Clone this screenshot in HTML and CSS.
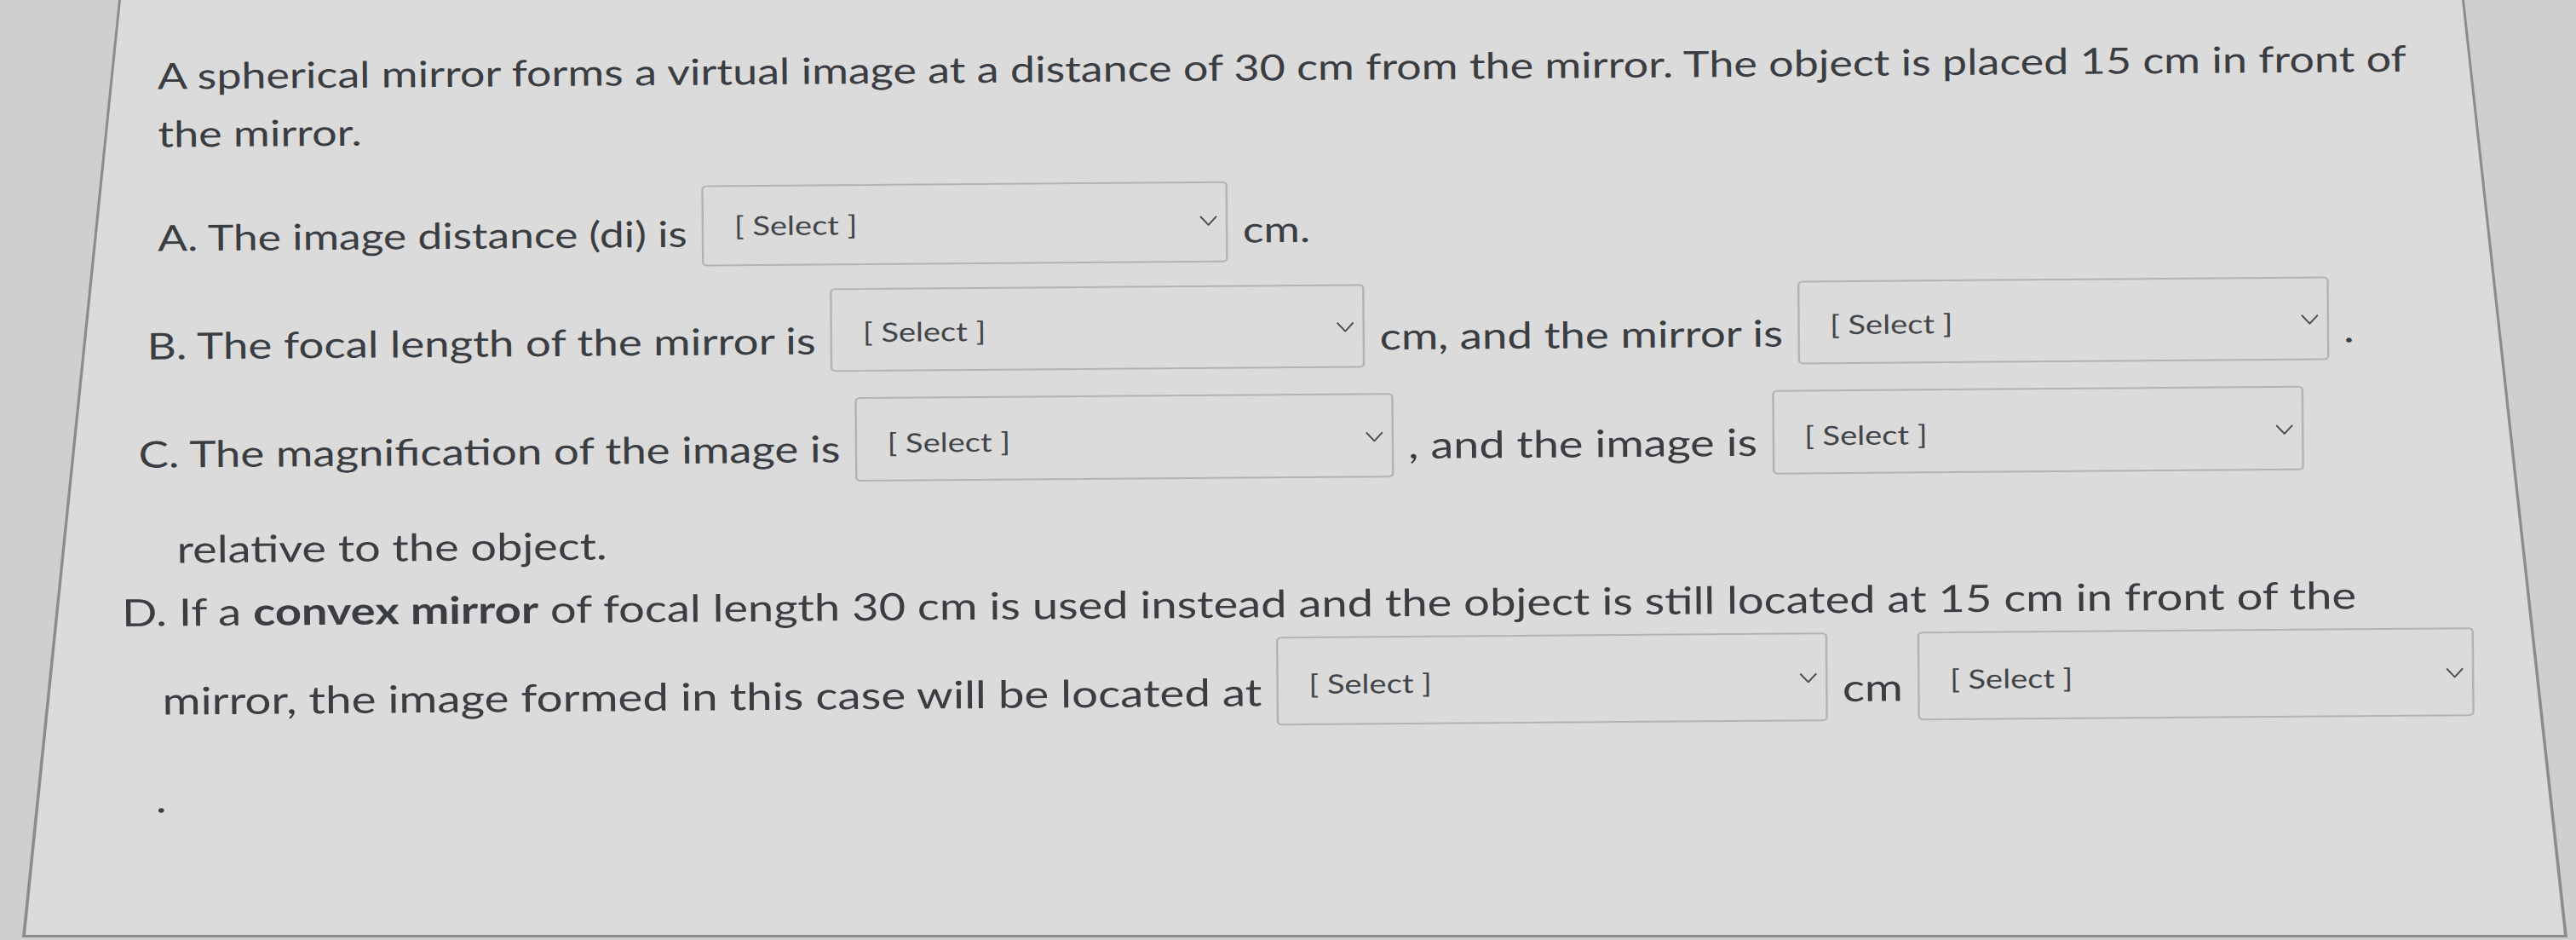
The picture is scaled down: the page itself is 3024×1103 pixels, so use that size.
FILE: index.html
```html
<!DOCTYPE html>
<html lang="en">
<head>
<meta charset="utf-8">
<title>Spherical mirror question</title>
<link rel="stylesheet" href="styles.css">
</head>
<body>
<div class="frame">
  <div class="panel">
    <div class="content">
      <p class="intro">A spherical mirror forms a virtual image at a distance of 30 cm from the mirror. The object is placed 15 cm in front of<br>the mirror.</p>

      <div class="row row-a">
        <span class="t">A. The image distance (di) is</span>
        <div class="sel sel-a"><span class="sv">[ Select ]</span><svg class="chev" viewBox="0 0 22 12" preserveAspectRatio="none"><polyline points="1,1 11,11 21,1"/></svg></div>
        <span class="t">cm.</span>
      </div>

      <div class="row row-b">
        <span class="t">B. The focal length of the mirror is</span>
        <div class="sel sel-b1"><span class="sv">[ Select ]</span><svg class="chev" viewBox="0 0 22 12" preserveAspectRatio="none"><polyline points="1,1 11,11 21,1"/></svg></div>
        <span class="t">cm, and the mirror is</span>
        <div class="sel sel-b2"><span class="sv">[ Select ]</span><svg class="chev" viewBox="0 0 22 12" preserveAspectRatio="none"><polyline points="1,1 11,11 21,1"/></svg></div>
        <span class="t">.</span>
      </div>

      <div class="row row-c">
        <span class="t">C. The magnification of the image is</span>
        <div class="sel sel-c1"><span class="sv">[ Select ]</span><svg class="chev" viewBox="0 0 22 12" preserveAspectRatio="none"><polyline points="1,1 11,11 21,1"/></svg></div>
        <span class="t t-comma">, and the image is</span>
        <div class="sel sel-c2"><span class="sv">[ Select ]</span><svg class="chev" viewBox="0 0 22 12" preserveAspectRatio="none"><polyline points="1,1 11,11 21,1"/></svg></div>
      </div>

      <p class="line line-rel">relative to the object.</p>

      <p class="line line-d">D. If a <b>convex mirror</b> of focal length 30 cm is used instead and the object is still located at 15 cm in front of the</p>

      <div class="row row-d">
        <span class="t">mirror, the image formed in this case will be located at</span>
        <div class="sel sel-d1"><span class="sv">[ Select ]</span><svg class="chev" viewBox="0 0 22 12" preserveAspectRatio="none"><polyline points="1,1 11,11 21,1"/></svg></div>
        <span class="t">cm</span>
        <div class="sel sel-d2"><span class="sv">[ Select ]</span><svg class="chev" viewBox="0 0 22 12" preserveAspectRatio="none"><polyline points="1,1 11,11 21,1"/></svg></div>
      </div>

      <p class="line line-dot">.</p>
    </div>
  </div>
</div>
</body>
</html>
```

FILE: styles.css
```css
* { box-sizing: border-box; }

html, body {
  margin: 0;
  padding: 0;
}

body {
  width: 3024px;
  height: 1103px;
  overflow: hidden;
  background: #cfcfcf;
  font-family: Lato, "Open Sans", "Liberation Sans", sans-serif;
  color: #3a3d42;
}

.frame {
  width: 3024px;
  height: 1103px;
  background: #8a8c91;
  clip-path: polygon(139px 0, 2893px 0, 3014px 1100px, 26px 1100px);
}

.panel {
  height: 100%;
  background: #dbdbdb;
  clip-path: polygon(142px 0, 2890px 0, 3010px 1097px, 30px 1097px);
}

/* the photo is slightly rotated and stretched horizontally */
.content {
  width: 2400px;
  padding-top: 56px;
  transform: rotate(-0.45deg) scaleX(1.228);
  transform-origin: 0 0;
}

.intro {
  margin: 0 0 0 150px;
  font-size: 42.4px;
  line-height: 68px;
  white-space: nowrap;
}

.row {
  display: flex;
  align-items: flex-start;
  gap: 14px;
  white-space: nowrap;
}

.t {
  font-size: 42px;
  line-height: 42px;
}

.sel {
  display: flex;
  align-items: flex-start;
  justify-content: space-between;
  border: 2px solid #b3b3b3;
  border-radius: 5px;
  height: 95px;
  padding: 0 8px 0 29px;
}

.sv {
  font-size: 31px;
  line-height: 31px;
  margin-top: 30px;
  color: #42454a;
}

.chev {
  width: 17px;
  height: 12px;
  margin-top: 38px;
  fill: none;
  stroke: #4a4d52;
  stroke-width: 2;
}

.sel-a  { width: 503px; }
.sel-b1 { width: 511px; }
.sel-b2 { width: 508px; }
.sel-c1 { width: 515px; }
.sel-c2 { width: 508px; }
.sel-d1 { width: 527px; }
.sel-d2 { width: 532px; }

/* row A */
.row-a {
  margin-top: 32px;
  margin-left: 149px;
}
.row-a .t { margin-top: 35px; }

/* row B */
.row-b {
  margin-top: 27px;
  margin-left: 138px;
}
.row-b .t {
  font-size: 43px;
  line-height: 43px;
  margin-top: 39px;
}
.row-b .sel { height: 98px; }
.row-b .sv { margin-top: 34px; }
.row-b .chev { margin-top: 42px; }

/* row C */
.row-c {
  margin-top: 30px;
  margin-left: 129px;
}
.row-c .t {
  font-size: 43px;
  line-height: 44px;
  margin-top: 38px;
}
.row-c .t-comma { font-size: 44px; }
.row-c .sel { height: 99px; }
.row-c .sv { margin-top: 36px; }
.row-c .chev { margin-top: 43px; }

.line {
  margin: 0;
  font-size: 44px;
  line-height: 50px;
  white-space: nowrap;
}

.line b { font-weight: 700; }

.line-rel {
  margin-top: 47px;
  margin-left: 165px;
}

.line-d {
  margin-top: 24px;
  margin-left: 112px;
  font-size: 44.2px;
}

/* row D second line */
.row-d {
  margin-top: 15px;
  margin-left: 150px;
}
.row-d .t {
  font-size: 44.5px;
  line-height: 44px;
  margin-top: 42px;
}
.row-d .sel { height: 104px; }
.row-d .sv { margin-top: 38px; }
.row-d .chev { margin-top: 45px; }

.line-dot {
  margin-top: 50px;
  margin-left: 143px;
}
```
